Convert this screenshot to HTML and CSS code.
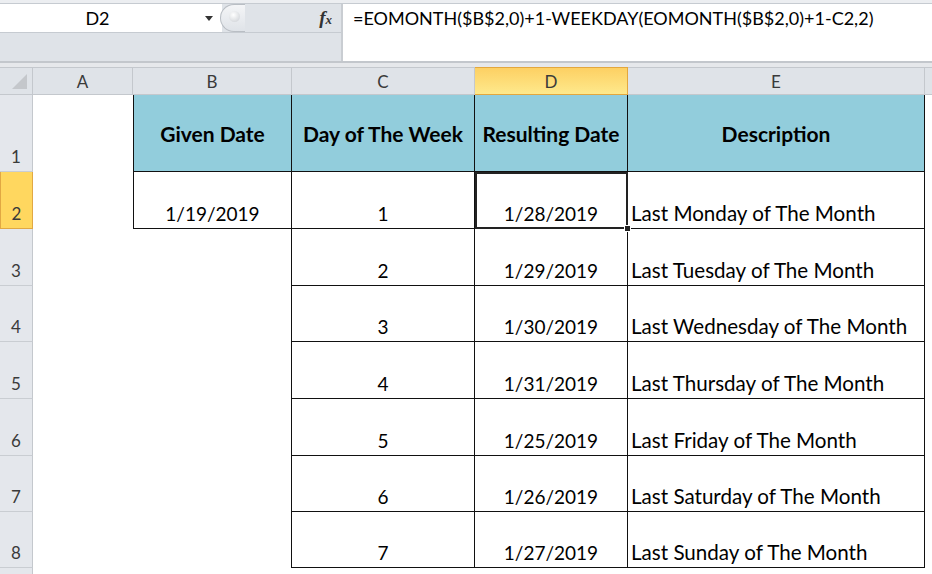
FILE: index.html
```html
<!DOCTYPE html>
<html lang="en">
<head>
    <meta charset="UTF-8">
    <meta name="viewport" content="width=device-width, initial-scale=1.0">
    <title>Last weekday of the month</title>

    <link rel="stylesheet" href="styles.css">
</head>
<body>

    <!-- FORMULA BAR -->
    <div class="formula-bar">
        <div class="bar-row">
            <div class="name-side">
                <div class="name-line">
                    <div class="name-box">
                        <span class="name-text">D2</span>
                        <span class="arrow"></span>
                    </div>
                    <div class="grip"><span class="knob"></span></div>
                    <div class="fx">f<span class="fx-sub">x</span></div>
                </div>
                <div class="name-under"></div>
            </div>
            <div class="formula">=EOMONTH($B$2,0)+1-WEEKDAY(EOMONTH($B$2,0)+1-C2,2)</div>
        </div>
    </div>
    <div class="strip"></div>

    <!-- SHEET -->
    <div class="sheet">
        <div class="corner"><span class="tri"></span></div>
        <div class="col-head">A</div>
        <div class="col-head">B</div>
        <div class="col-head">C</div>
        <div class="col-head active">D</div>
        <div class="col-head">E</div>
        <div class="col-head rest"></div>

        <div class="row-head">1</div>
        <div class="cell"></div>
        <div class="cell th lb">Given Date</div>
        <div class="cell th">Day of The Week</div>
        <div class="cell th">Resulting Date</div>
        <div class="cell th">Description</div>
        <div class="cell"></div>

        <div class="row-head active">2</div>
        <div class="cell"></div>
        <div class="cell td lb">1/19/2019</div>
        <div class="cell td">1</div>
        <div class="cell td selected">1/28/2019</div>
        <div class="cell td desc">Last Monday of The Month</div>
        <div class="cell"></div>

        <div class="row-head">3</div>
        <div class="cell"></div>
        <div class="cell rb"></div>
        <div class="cell td">2</div>
        <div class="cell td">1/29/2019</div>
        <div class="cell td desc">Last Tuesday of The Month</div>
        <div class="cell"></div>

        <div class="row-head">4</div>
        <div class="cell"></div>
        <div class="cell rb"></div>
        <div class="cell td">3</div>
        <div class="cell td">1/30/2019</div>
        <div class="cell td desc">Last Wednesday of The Month</div>
        <div class="cell"></div>

        <div class="row-head">5</div>
        <div class="cell"></div>
        <div class="cell rb"></div>
        <div class="cell td">4</div>
        <div class="cell td">1/31/2019</div>
        <div class="cell td desc">Last Thursday of The Month</div>
        <div class="cell"></div>

        <div class="row-head">6</div>
        <div class="cell"></div>
        <div class="cell rb"></div>
        <div class="cell td">5</div>
        <div class="cell td">1/25/2019</div>
        <div class="cell td desc">Last Friday of The Month</div>
        <div class="cell"></div>

        <div class="row-head">7</div>
        <div class="cell"></div>
        <div class="cell rb"></div>
        <div class="cell td">6</div>
        <div class="cell td">1/26/2019</div>
        <div class="cell td desc">Last Saturday of The Month</div>
        <div class="cell"></div>

        <div class="row-head">8</div>
        <div class="cell"></div>
        <div class="cell rb"></div>
        <div class="cell td">7</div>
        <div class="cell td">1/27/2019</div>
        <div class="cell td desc">Last Sunday of The Month</div>
        <div class="cell"></div>

        <div class="row-head"></div>
    </div>

</body>
</html>
```

FILE: styles.css
```css
/* PAGE */
body {
    margin: 0;
    background-color: white;
    font-family: Lato, "Liberation Sans", sans-serif;
    color: #000;
    overflow: hidden;
}

/* FORMULA BAR */
.formula-bar {
    padding-top: 3px;
    background-color: #eceef1;
    border-bottom: 2px solid #c3c7cc;
}

.bar-row {
    display: flex;
    height: 57px;
    border-top: 1px solid #c6cbd1;
}

.name-side {
    width: 341px;
    display: flex;
    flex-direction: column;
    background-color: #dfe3e8;
}

.name-line {
    display: flex;
    height: 28px;
}

.name-box {
    width: 222px;
    display: flex;
    align-items: center;
    background-color: white;
}

.name-text {
    width: 195px;
    text-align: center;
    font-size: 18px;
}

.arrow {
    width: 0;
    height: 0;
    margin-left: 10px;
    border-left: 4px solid transparent;
    border-right: 4px solid transparent;
    border-top: 5px solid #333;
}

.grip {
    width: 24px;
    margin-left: -2px;
    border: 1px solid #b9bec4;
    border-right: none;
    border-radius: 14px 0 0 14px;
    background: linear-gradient(#f4f5f7, #dfe3e8);
    position: relative;
}

.knob {
    position: absolute;
    top: 6px;
    left: 8px;
    width: 11px;
    height: 11px;
    border-radius: 50%;
    background: radial-gradient(circle at 40% 35%, #ffffff, #c9cdd2);
}

.fx {
    flex: 1;
    text-align: right;
    padding-right: 9px;
    font-family: "Liberation Serif", serif;
    font-style: italic;
    font-weight: bold;
    font-size: 19px;
    line-height: 28px;
    color: #333;
}

.fx-sub {
    font-size: 13px;
}

.name-under {
    flex: 1;
    border-top: 1px solid #c6cbd1;
}

.formula {
    flex: 1;
    background-color: white;
    border-left: 2px solid #c9cdd2;
    padding: 3px 10px;
    font-size: 18px;
    line-height: 22px;
    white-space: nowrap;
}

.strip {
    height: 4px;
    background-color: #e6e8eb;
}

/* -------------------------------------- */

.sheet {
    display: grid;
    grid-template-columns: 33px 100px 159px 183px 153px 297px 1fr;
    grid-template-rows: 28px 77px 57px 57px 56px 57px 57px 56px 56px 8px;
}

.corner, .col-head {
    box-sizing: border-box;
    background-color: #dfe3e8;
    border-top: 1px solid #c4c8cd;
    border-bottom: 1px solid #c4c8cd;
    border-right: 1px solid #c4c8cd;
}

.corner {
    position: relative;
}

.tri {
    position: absolute;
    right: 5px;
    bottom: 5px;
    width: 0;
    height: 0;
    border-left: 15px solid transparent;
    border-bottom: 15px solid #c4c7cb;
}

.col-head {
    display: flex;
    justify-content: center;
    align-items: center;
    font-size: 17px;
    color: #3a3a3a;
}

.col-head.active {
    background: linear-gradient(#fdd063, #fee98c);
    border: 1px solid #e3a73e;
    border-left: none;
}

.col-head.rest {
    border-right: none;
}

.row-head {
    box-sizing: border-box;
    background-color: #e4e7ec;
    border-right: 1px solid #c4c8cd;
    border-bottom: 1px solid #c9cdd2;
    display: flex;
    justify-content: center;
    align-items: flex-end;
    padding-bottom: 4px;
    font-size: 17px;
    color: #3a3a3a;
}

.row-head.active {
    background-color: #ffd75f;
    border: 1px solid #e1a843;
    border-top: none;
}

.cell {
    box-sizing: border-box;
    min-width: 0;
}

.th, .td, .rb {
    border-right: 1px solid #111;
}

.th, .td {
    border-bottom: 1px solid #111;
}

.lb {
    border-left: 1px solid #111;
}

.th {
    background-color: #92cddc;
    display: flex;
    justify-content: center;
    align-items: center;
    font-weight: bold;
    font-size: 21px;
    white-space: nowrap;
    padding-top: 0;
}

.td {
    display: flex;
    justify-content: center;
    align-items: flex-end;
    padding-bottom: 3px;
    font-size: 19px;
    white-space: nowrap;
}

.td.desc {
    justify-content: flex-start;
    padding-left: 3px;
    font-size: 20.6px;
}

.selected {
    position: relative;
    outline: 2px solid #222;
    outline-offset: -2px;
}

.selected::after {
    content: "";
    position: absolute;
    right: -4px;
    bottom: -4px;
    width: 5px;
    height: 5px;
    background-color: #222;
    border: 1px solid white;
}
```
